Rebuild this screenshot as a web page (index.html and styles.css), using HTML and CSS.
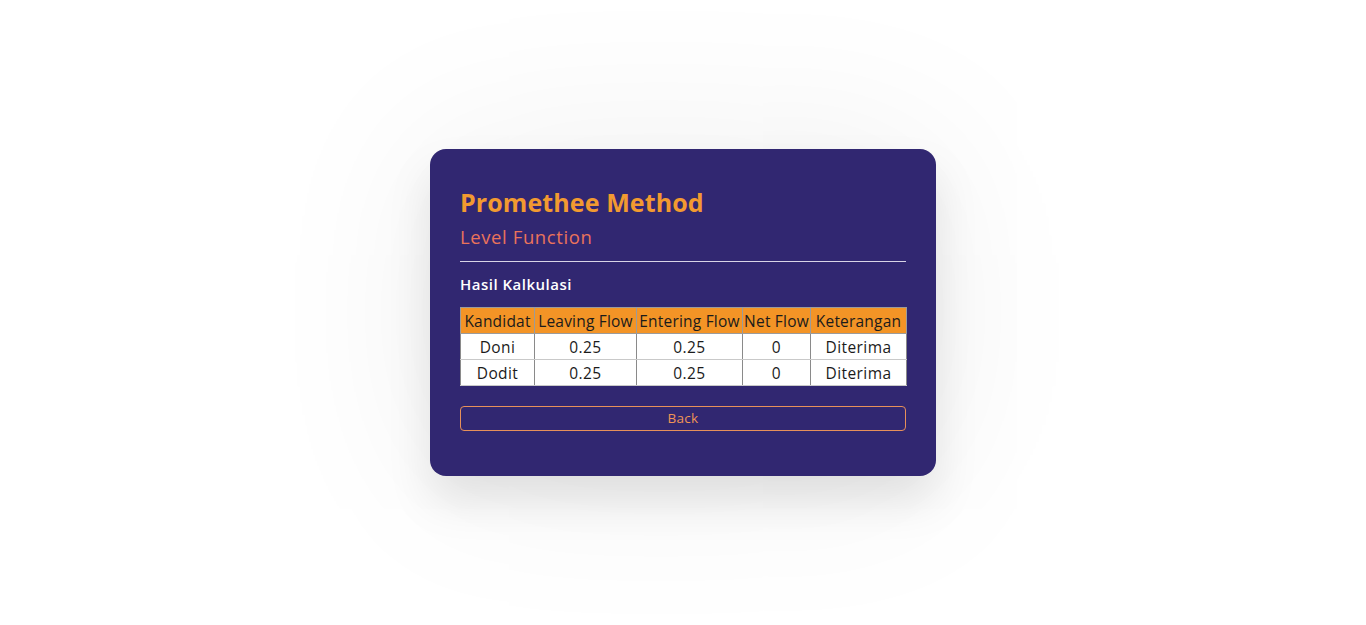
FILE: index.html
```html
<!DOCTYPE html>
<html lang="id">
<head>
<meta charset="utf-8">
<title>Promethee Method</title>
<link rel="stylesheet" href="styles.css">
</head>
<body>
<main class="card">
  <h1 class="title">Promethee Method</h1>
  <h2 class="subtitle">Level Function</h2>
  <hr class="divider">
  <h3 class="section">Hasil Kalkulasi</h3>
  <table class="result">
    <colgroup>
      <col class="c1"><col class="c2"><col class="c3"><col class="c4"><col class="c5">
    </colgroup>
    <thead>
      <tr><th>Kandidat</th><th>Leaving Flow</th><th>Entering Flow</th><th>Net Flow</th><th>Keterangan</th></tr>
    </thead>
    <tbody>
      <tr><td>Doni</td><td>0.25</td><td>0.25</td><td>0</td><td>Diterima</td></tr>
      <tr><td>Dodit</td><td>0.25</td><td>0.25</td><td>0</td><td>Diterima</td></tr>
    </tbody>
  </table>
  <button class="back" type="button">Back</button>
</main>
</body>
</html>
```

FILE: styles.css
```css
* { box-sizing: border-box; }
html, body { height: 100%; }
body {
  margin: 0;
  background: #ffffff;
  font-family: "Open Sans", "Liberation Sans", sans-serif;
  display: flex;
  align-items: center;
  justify-content: center;
}
.card {
  width: 506px;
  height: 327px;
  background: #312771;
  border-radius: 16px;
  padding: 35px 30px 45px;
  box-shadow: 0 25px 45px rgba(0,0,0,0.10), 0 0 180px rgba(0,0,0,0.07);
}
.title {
  margin: 0;
  font-size: 25px;
  line-height: 36px;
  font-weight: 700;
  color: #f29a30;
  letter-spacing: 0.1px;
}
.subtitle {
  margin: 3px 0 0;
  font-size: 18.5px;
  line-height: 27px;
  font-weight: 400;
  color: #ea735b;
  letter-spacing: 0.6px;
}
.divider {
  margin: 11px 0 0;
  border: 0;
  height: 1px;
  background: #d8d4e6;
}
.section {
  margin: 11px 0 0;
  font-size: 15px;
  line-height: 22px;
  font-weight: 600;
  color: #ffffff;
  letter-spacing: 0.5px;
}
.result {
  margin-top: 12px;
  width: 446px;
  table-layout: fixed;
  border-collapse: collapse;
  font-size: 15.5px;
  color: #1b1b1b;
}
.c1 { width: 74px; }
.c2 { width: 102px; }
.c3 { width: 106px; }
.c4 { width: 68px; }
.c5 { width: 96px; }
.result th, .result td {
  padding: 0;
  height: 26px;
  line-height: 24px;
  text-align: center;
  font-weight: 400;
  white-space: nowrap;
  overflow: hidden;
  border: 1px solid #9b9b9b;
}
.result th {
  background: #f39426;
  letter-spacing: 0.2px;
}
.result td {
  background: #ffffff;
  border-color: #c9c9c9 #8a8a8a;
  letter-spacing: 0.4px;
}
.back {
  display: block;
  width: 100%;
  margin-top: 20px;
  height: 25px;
  padding: 0;
  background: transparent;
  border: 1px solid #e7905a;
  border-radius: 4px;
  color: #ef9455;
  font-family: inherit;
  font-size: 13.5px;
  line-height: 23px;
  letter-spacing: 0.3px;
}
```
